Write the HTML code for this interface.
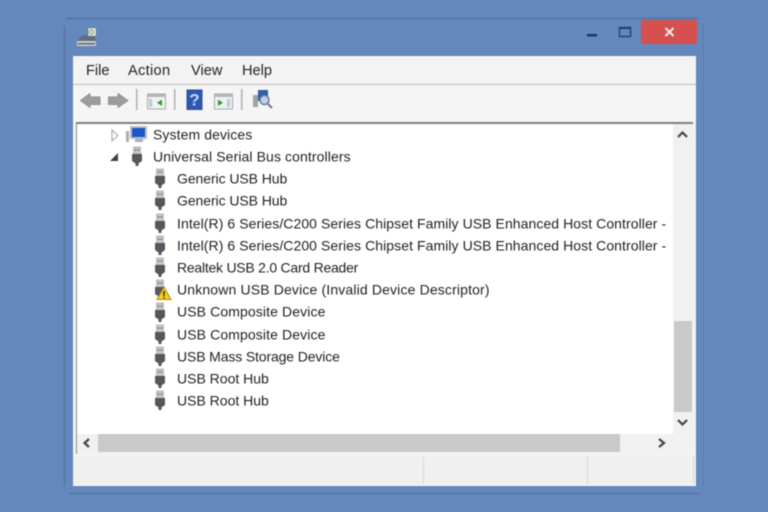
<!DOCTYPE html>
<html><head><meta charset="utf-8"><style>
html,body{margin:0;padding:0}
body{width:768px;height:512px;background:#6487bc;position:relative;overflow:hidden;font-family:"Liberation Sans",sans-serif}
#w{position:absolute;left:0;top:0;width:768px;height:512px;filter:blur(.5px)}
#r{position:absolute;left:0;top:0;width:768px;height:512px;transform:translateY(-.5px)}
.a{position:absolute}
.t{position:absolute;font-size:14px;color:#222;line-height:22px;white-space:nowrap;height:22px}
.m{font-size:14.6px}
</style></head><body><div id="w">
<div class="a" style="left:66px;top:18px;width:632px;height:1px;background:#4c6c9c"></div>
<div class="a" style="left:64px;top:26px;width:1px;height:460px;background:#4f6f9f"></div>
<div class="a" style="left:703px;top:24px;width:1px;height:462px;background:#5a7cb0"></div>
<div class="a" style="left:70px;top:493px;width:630px;height:1px;background:#4f6f9f"></div>
<div class="a" style="left:641px;top:20px;width:56px;height:24px;background:#d5504f"></div>
<svg class="a" style="left:0;top:0" width="768" height="512">
<path d="M665.500 28L673.500 36M673.500 28L665.500 36" stroke="#fff" stroke-width="1.800" fill="none"/>
<rect x="587" y="34" width="10" height="2.5" fill="#1f3557"/>
<rect x="619.500" y="27.500" width="11" height="9" fill="#6487bc" stroke="#1f3e6e" stroke-width="1.300"/>
<rect x="619" y="27" width="12" height="2" fill="#1f3e6e"/>
<path d="M77 42L81 36 87 35V30H95V40H96V46H77Z" fill="#5f6f82"/>
<rect x="88" y="28" width="8" height="8" fill="#e8eee4" stroke="#888" stroke-width=".7"/>
<circle cx="91.500" cy="32" r="2" fill="none" stroke="#6f9a60"/>
<rect x="77" y="41" width="19" height="5" fill="#c9ced4"/>
<rect x="78" y="43" width="17" height="1.500" fill="#666"/>
</svg>
<div class="a" style="left:73px;top:56px;width:623px;height:430px;background:#f3f3f4"></div>
<div class="a" style="left:73px;top:84px;width:623px;height:1px;background:#bdbdbd"></div>
<div class="a" style="left:73px;top:85px;width:623px;height:37px;background:#f5f5f6"></div>
<div class="t m" style="left:86px;top:60px">File</div>
<div class="t m" style="left:128px;top:60px;letter-spacing:.3px">Action</div>
<div class="t m" style="left:191px;top:60px">View</div>
<div class="t m" style="left:242px;top:60px">Help</div>
<svg class="a" style="left:0;top:0" width="768" height="512">
<path d="M80.500 100.500L90 93.500V97H100V104.500H90V107.500Z" fill="#9c9e9e" stroke="#8f9191" stroke-linejoin="round"/>
<path d="M128 100.500L118 93.500V97H108.500V104.500H118V107.500Z" fill="#9c9e9e" stroke="#8f9191" stroke-linejoin="round"/>
<rect x="136" y="89" width="1.500" height="21" fill="#b0b0b0"/>
<rect x="174" y="89" width="1.500" height="21" fill="#b0b0b0"/>
<rect x="241" y="89" width="1.500" height="21" fill="#b0b0b0"/>
<rect x="147.500" y="94" width="18" height="15" fill="#f0f2f2" stroke="#a3a9a9"/>
<rect x="147" y="94" width="19" height="3" fill="#b0b5b5"/>
<rect x="149" y="99" width="3" height="8" fill="#b9c9d8"/>
<path d="M162 99.500V106L157 102.700Z" fill="#2f9a3c"/>
<rect x="214.500" y="94" width="18" height="15" fill="#f0f2f2" stroke="#a3a9a9"/>
<rect x="214" y="94" width="19" height="3" fill="#b0b5b5"/>
<rect x="227" y="99" width="3" height="8" fill="#b9c9d8"/>
<path d="M218 99.500V106L223 102.700Z" fill="#2f9a3c"/>
<rect x="187" y="90" width="15" height="19.500" fill="#2e56b4" stroke="#2a4f98"/>
<text x="194.500" y="105.500" font-family="Liberation Sans" font-size="17" font-weight="bold" fill="#c8d6f2" text-anchor="middle">?</text>
<rect x="253" y="95" width="5" height="12" fill="#9aa69f"/>
<rect x="258" y="90" width="10" height="11" fill="#2d5ea8"/>
<circle cx="264.500" cy="100" r="4.500" fill="#bcd0e8" stroke="#6a7f98" stroke-width="1.500"/>
<path d="M268 104L272 108" stroke="#778" stroke-width="2"/>
</svg>
<div class="a" style="left:76px;top:122px;width:617px;height:2px;background:#7e7e7e"></div>
<div class="a" style="left:76px;top:124px;width:597px;height:310px;background:#fff"></div>
<div class="a" style="left:76px;top:124px;width:1px;height:330px;background:#8a8a8a"></div>
<div class="a" style="left:673px;top:124px;width:21px;height:310px;background:#f1f1f1"></div>
<div class="a" style="left:674px;top:321px;width:18px;height:91px;background:#c9c9c9"></div>
<div class="a" style="left:77px;top:434px;width:616px;height:19px;background:#f1f1f1"></div>
<div class="a" style="left:98px;top:434px;width:522px;height:18px;background:#c9c9c9"></div>
<div class="a" style="left:73px;top:456px;width:623px;height:29px;background:#f0f0f0"></div>
<div class="a" style="left:73px;top:485px;width:623px;height:1px;background:#fafafa"></div>
<div class="a" style="left:423px;top:457px;width:1px;height:27px;background:#d6d6d6"></div>
<div class="a" style="left:587px;top:457px;width:1px;height:27px;background:#d6d6d6"></div>
<div class="a" style="left:693px;top:457px;width:1px;height:27px;background:#d6d6d6"></div>
<svg class="a" style="left:0;top:0" width="768" height="512">
<g fill="none" stroke="#444" stroke-width="2.200">
<path d="M678 137L682.500 132.500 687 137"/>
<path d="M678 420L682.500 424.500 687 420"/>
<path d="M89 439L84.500 443 89 447"/>
<path d="M659 439L664 443 659 447"/>
</g>
<path d="M112 130V141L118 135.500Z" fill="#fff" stroke="#a0a0a0"/>
<path d="M118 153V161H110Z" fill="#404040"/>
<rect x="126" y="131" width="3" height="11" fill="#a7b0aa"/>
<rect x="130" y="126" width="17" height="13" fill="#b5bfc9"/>
<rect x="132" y="128" width="13" height="9" fill="#1c55c8"/>
<rect x="135" y="139" width="8" height="3" fill="#a8b0b8"/>
<defs>
<g id="u"><rect x="-3.500" y="0" width="7" height="7" fill="#c9cbcc" stroke="#999" stroke-width=".6"/><rect x="-2" y="2" width="1.200" height="2" fill="#666"/><rect x=".8" y="2" width="1.200" height="2" fill="#666"/><path d="M-5 7H5V14L1.500 16.500V19H-1.500V16.500L-5 14Z" fill="#55585e"/></g>
</defs>
<use href="#u" x="137" y="147"/>
<use href="#u" x="160" y="169"/>
<use href="#u" x="160" y="191"/>
<use href="#u" x="160" y="214"/>
<use href="#u" x="160" y="236"/>
<use href="#u" x="160" y="258"/>
<use href="#u" x="160" y="280"/>
<use href="#u" x="160" y="303"/>
<use href="#u" x="160" y="325"/>
<use href="#u" x="160" y="347"/>
<use href="#u" x="160" y="369"/>
<use href="#u" x="160" y="391"/>
<path d="M164 287L171 299.500H157Z" fill="#f5d020" stroke="#b58a10"/>
<rect x="163.300" y="291" width="1.400" height="5" fill="#222"/>
<rect x="163.300" y="297" width="1.400" height="1.400" fill="#222"/>
</svg>
<div id="r">
<div class="t" style="left:153px;top:124px;letter-spacing:.09px">System devices</div>
<div class="t" style="left:153px;top:146px;letter-spacing:.1px">Universal Serial Bus controllers</div>
<div class="t" style="left:177px;top:168px;letter-spacing:-.07px">Generic USB Hub</div>
<div class="t" style="left:177px;top:190px;letter-spacing:-.07px">Generic USB Hub</div>
<div class="t" style="left:177px;top:213px;width:493px;overflow:hidden;letter-spacing:.07px">Intel(R) 6 Series/C200 Series Chipset Family USB Enhanced Host Controller - 1</div>
<div class="t" style="left:177px;top:235px;width:493px;overflow:hidden;letter-spacing:.07px">Intel(R) 6 Series/C200 Series Chipset Family USB Enhanced Host Controller - 1</div>
<div class="t" style="left:177px;top:257px;letter-spacing:-.24px">Realtek USB 2.0 Card Reader</div>
<div class="t" style="left:177px;top:279px;letter-spacing:.15px">Unknown USB Device (Invalid Device Descriptor)</div>
<div class="t" style="left:177px;top:301px;letter-spacing:.11px">USB Composite Device</div>
<div class="t" style="left:177px;top:324px;letter-spacing:.11px">USB Composite Device</div>
<div class="t" style="left:177px;top:346px;letter-spacing:-.13px">USB Mass Storage Device</div>
<div class="t" style="left:177px;top:368px">USB Root Hub</div>
<div class="t" style="left:177px;top:390px">USB Root Hub</div>
</div>
</div></body></html>
